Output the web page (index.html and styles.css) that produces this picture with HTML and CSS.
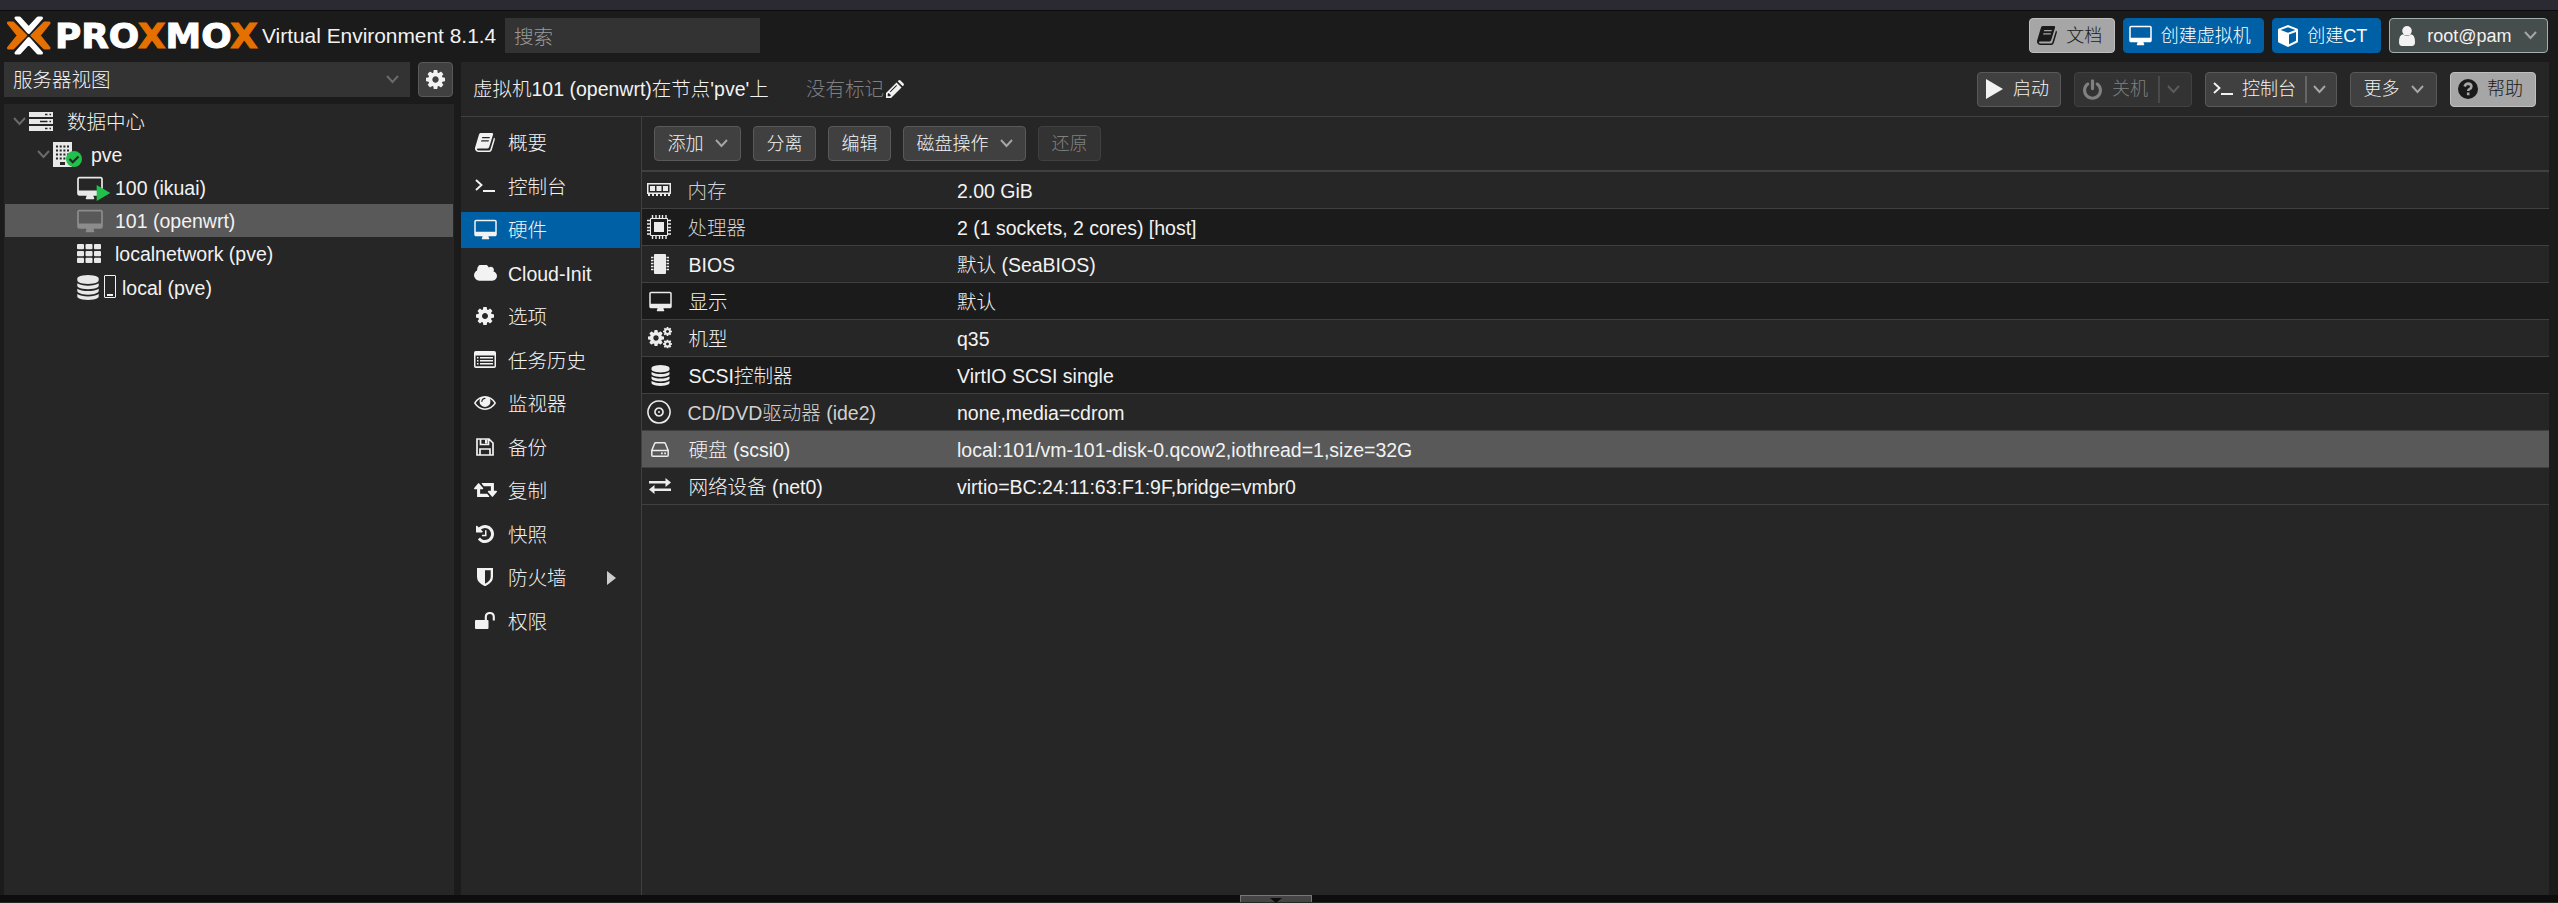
FILE: index.html
```
<!DOCTYPE html>
<html lang="zh-CN">
<head>
    <meta charset="UTF-8">
    <meta name="viewport" content="width=device-width, initial-scale=1.0">
    <title>pve - Proxmox Virtual Environment</title>
    <link rel="stylesheet" href="styles.css">
</head>
<body>

    <!-- Icon set -->
    <svg class="sprite" xmlns="http://www.w3.org/2000/svg">
        <symbol id="desktop" viewBox="0 0 1920 1792"><path d="M1792 1056v-832q0-13-9.500-22.500t-22.500-9.500h-1600q-13 0-22.500 9.500t-9.500 22.500v832q0 13 9.500 22.500t22.500 9.500h1600q13 0 22.500-9.500t9.500-22.500zm128-832v1088q0 66-47 113t-113 47h-544q0 37 16 77.500t32 71 16 43.500q0 26-19 45t-45 19h-512q-26 0-45-19t-19-45q0-14 16-44t32-70 16-78h-544q-66 0-113-47t-47-113v-1088q0-66 47-113t113-47h1600q66 0 113 47t47 113z"/></symbol>
        <symbol id="cog" viewBox="128 128 1536 1536"><path d="M1152 896q0-106-75-181t-181-75-181 75-75 181 75 181 181 75 181-75 75-181zm512-109v222q0 12-8 23t-20 13l-185 28q-19 54-39 91 35 50 107 138 10 12 10 25t-9 23q-27 37-99 108t-94 71q-12 0-26-9l-138-108q-44 23-91 38-16 136-29 186-7 28-36 28h-222q-14 0-24.500-8.500t-11.500-21.500l-28-184q-49-16-90-37l-141 107q-10 9-25 9-14 0-25-11-126-114-165-168-7-10-7-23 0-12 8-23 15-21 51-66.500t54-70.500q-27-50-41-99l-183-27q-13-2-21-12.500t-8-23.500v-222q0-12 8-23t19-13l186-28q14-46 39-92-40-57-107-138-10-12-10-24 0-10 9-23 26-36 98.500-107.500t94.500-71.500q13 0 26 10l138 107q44-23 91-38 16-136 29-186 7-28 36-28h222q14 0 24.500 8.500t11.500 21.500l28 184q49 16 90 37l142-107q9-9 24-9 13 0 25 10 129 119 165 170 7 8 7 22 0 12-8 23-15 21-51 66.500t-54 70.500q26 50 41 98l183 28q13 2 21 12.500t8 23.500z"/></symbol>
        <symbol id="cogs" viewBox="0 0 24 22">
            <use href="#cog" x="0" y="3" width="16" height="16"/>
            <use href="#cog" x="15" y="0" width="9" height="9"/>
            <use href="#cog" x="15" y="12.500" width="9" height="9"/>
        </symbol>
        <symbol id="cloud" viewBox="64 256 1920 1280"><path d="M1984 1152q0 159-112.500 271.500t-271.500 112.500h-1088q-185 0-316.500-131.500t-131.500-316.500q0-132 71-241.500t187-163.500q-2-28-2-43 0-212 150-362t362-150q158 0 286.500 88t187.500 230q70-62 166-62 106 0 181 75t75 181q0 75-41 138 129 30 213 134.500t84 239.500z"/></symbol>
        <symbol id="eye" viewBox="0 384 1792 1152"><path d="M1664 960q-152-236-381-353 61 104 61 225 0 185-131.500 316.500t-316.500 131.500-316.500-131.500-131.500-316.500q0-121 61-225-229 117-381 353 133 205 333.500 326.500t434.500 121.500 434.500-121.500 333.500-326.500zm-720-384q0-20-14-34t-34-14q-125 0-214.500 89.500t-89.500 214.500q0 20 14 34t34 14 34-14 14-34q0-86 61-147t147-61q20 0 34-14t14-34zm848 384q0 34-20 69-140 230-376.500 368.500t-499.500 138.500-499.500-139-376.500-368q-20-35-20-69t20-69q140-229 376.500-368t499.500-139 499.500 139 376.500 368q20 35 20 69z"/></symbol>
        <symbol id="database" viewBox="128 0 1536 1792"><path d="M896 768q237 0 443-43t325-127v170q0 69-103 128t-280 93.500-385 34.500-385-34.500-280-93.500-103-128v-170q119 84 325 127t443 43zm0 768q237 0 443-43t325-127v170q0 69-103 128t-280 93.500-385 34.500-385-34.500-280-93.500-103-128v-170q119 84 325 127t443 43zm0-384q237 0 443-43t325-127v170q0 69-103 128t-280 93.500-385 34.500-385-34.500-280-93.500-103-128v-170q119 84 325 127t443 43zm0-1152q208 0 385 34.500t280 93.500 103 128v128q0 69-103 128t-280 93.500-385 34.500-385-34.500-280-93.500-103-128v-128q0-69 103-128t280-93.500 385-34.500z"/></symbol>
        <symbol id="history" viewBox="128 128 1536 1536"><path d="M1664 896q0 156-61 298t-164 245-245 164-298 61q-172 0-327-72.500t-264-204.500q-7-10-6.500-22.500t8.500-20.500l137-138q10-9 25-9 16 2 23 12 73 95 179 147t225 52q104 0 198.500-40.500t163.500-109.500 109.500-163.500 40.500-198.500-40.500-198.500-109.500-163.500-163.500-109.500-198.500-40.500q-98 0-188 35.500t-160 101.500l137 138q31 30 14 69-17 40-59 40h-448q-26 0-45-19t-19-45v-448q0-42 40-59 39-17 69 14l130 129q107-101 244.500-156.500t284.500-55.500q156 0 298 61t245 164 164 245 61 298zm-640-288v448q0 14-9 23t-23 9h-320q-14 0-23-9t-9-23v-64q0-14 9-23t23-9h224v-352q0-14 9-23t23-9h64q14 0 23 9t9 23z"/></symbol>
        <symbol id="retweet" viewBox="0 384 1920 1152"><path d="M1280 1504q0 13-9.500 22.500t-22.500 9.500h-960q-8 0-13.500-2t-9-7-5.500-8-3-11.500-1-11.500v-600h-192q-26 0-45-19t-19-45q0-24 15-41l320-384q19-22 49-22t49 22l320 384q15 17 15 41 0 26-19 45t-45 19h-192v384h576q16 0 25 11l160 192q7 10 7 21zm640-416q0 24-15 41l-320 384q-20 23-49 23t-49-23l-320-384q-15-17-15-41 0-26 19-45t45-19h192v-384h-576q-16 0-25-12l-160-192q-7-9-7-20 0-13 9.500-22.500t22.500-9.500h960q8 0 13.500 2t9 7 5.500 8 3 11.500 1 11.500v600h192q26 0 45 19t19 45z"/></symbol>
        <symbol id="power" viewBox="128 0 1536 1664"><path d="M1664 896q0 156-61 298t-164 245-245 164-298 61-298-61-245-164-164-245-61-298q0-182 80.500-343t226.500-270q43-32 95.500-25t83.500 50q32 42 24.500 94.500t-49.500 84.500q-98 74-151.500 181t-53.500 228q0 104 40.500 198.500t109.500 163.500 163.500 109.500 198.500 40.500 198.500-40.500 163.500-109.500 109.500-163.500 40.500-198.500q0-121-53.500-228t-151.500-181q-42-32-49.500-84.500t24.500-94.500q31-43 84-50t95 25q146 109 226.500 270t80.500 343zm-640-768v640q0 52-38 90t-90 38-90-38-38-90v-640q0-52 38-90t90-38 90 38 38 90z"/></symbol>
        <symbol id="play" viewBox="0 0 17 20"><path d="M0 0l17 10L0 20z"/></symbol>
        <symbol id="book" viewBox="0 0 20 19">
            <path d="M5.500 0H17q1.500 0 1 1.700L14.200 14q-.5 1.500-2.200 1.500H3q-1.300 0-1 1.200.3.700 1.500.7h10.300q1.200 0 1.500-1L19 4.500q1.200.7.800 2.300L16.800 17q-.6 2-2.500 2H3Q.6 19 0 16.300q-.2-1 .2-2L4 1.600Q4.400 0 5.500 0zM7.300 4l-.4 1.300h7.600l.4-1.300zM6.400 7.200L6 8.500h7.600l.4-1.300z" fill-rule="evenodd"/>
        </symbol>
        <symbol id="terminal" viewBox="0 0 20 14">
            <path d="M1 1l5.500 5L1 11" fill="none" stroke="currentColor" stroke-width="1.900"/>
            <path d="M8 11h12v2H8z"/>
        </symbol>
        <symbol id="list" viewBox="0 0 22 17">
            <path d="M1.800 0h18.400Q22 0 22 1.800v13.400q0 1.800-1.800 1.800H1.800Q0 17 0 15.200V1.800Q0 0 1.800 0zM1.500 4.500v10.700h19V4.500z" fill-rule="evenodd"/>
            <path d="M3 6h1.500v1.500H3zM6 6h13v1.500H6zM3 9h1.500v1.500H3zM6 9h13v1.500H6zM3 12h1.500v1.500H3zM6 12h13v1.500H6z"/>
        </symbol>
        <symbol id="save" viewBox="0 0 18 18">
            <path d="M1 1h12l4 4v12H1zM4 17v-6h10v6M4.500 1v5.500h8V1" fill="none" stroke="currentColor" stroke-width="1.700"/>
            <path d="M9 1.500h2.300v4H9z"/>
        </symbol>
        <symbol id="shield" viewBox="0 0 16 18">
            <path d="M0 0h16v9q0 5.500-8 9.300Q0 14.500 0 9zM8 2.200v13.600q5.700-3 5.700-6.800V2.200z" fill-rule="evenodd"/>
        </symbol>
        <symbol id="unlock" viewBox="0 0 20 17">
            <path d="M1 8h11.500q1 0 1 1v7q0 1-1 1H1q-1 0-1-1V9q0-1 1-1z"/>
            <path d="M10.800 8.500V5q0-4 4-4t4 4v3.500" fill="none" stroke="currentColor" stroke-width="2.100"/>
        </symbol>
        <symbol id="pencil" viewBox="0 0 18 18">
            <path d="M0 18v-5L10.500 2.500l5 5L5 18zM1.700 14v2.300H4l1-1L2.700 13zM11.700 1.300L12.500.5q1-.9 2 0l3 3q.9 1 0 2l-.8.8zM10.300 5l-6.500 6.500.7.700L11 5.700z" fill-rule="evenodd"/>
        </symbol>
        <symbol id="cube" viewBox="0 0 20 22">
            <path d="M10 0l9.500 3.700q.5.300.5.900v11.800q0 .7-.6 1L10 22l-9.400-4.600q-.6-.3-.6-1V4.600Q0 4 .5 3.700zM10 2.200L2.600 5 10 7.800 17.400 5zM11 19.300l7-3.500V7l-7 2.600z" fill-rule="evenodd"/>
        </symbol>
        <symbol id="user" viewBox="0 0 16 20">
            <circle cx="8" cy="4.800" r="4.800"/>
            <path d="M4 8.300q1.700 1.600 4 1.600t4-1.600q4 .7 4 7.700 0 4-3 4H3q-3 0-3-4 0-7 4-7.700z"/>
        </symbol>
        <symbol id="help" viewBox="0 0 20 20">
            <circle cx="10" cy="10" r="10"/>
            <path class="help-mark" d="M6.600 7.500Q7.500 4.600 10.200 4.600q3.200.2 3.200 2.800 0 1.500-1.700 2.400-1.500.8-1.500 2.200M10.200 13.600v2.600"/>
        </symbol>
        <symbol id="chevron" viewBox="0 0 13 9"><path d="M1 1l5.500 6L12 1" fill="none" stroke="currentColor" stroke-width="1.900"/></symbol>
        <symbol id="server" viewBox="0 0 24 19">
            <path d="M0 0h24v5H0zM16 1.700v1.500h2.500V1.700zM20.500 1.700v1.500h1.500V1.700zM0 7h24v5H0zM11 8.700v1.500h7.500V8.700zM20.500 8.700v1.500h1.500V8.700zM0 14h24v5H0zM16 15.700v1.500h2.500v-1.500zM20.500 15.700v1.500h1.500v-1.500z" fill-rule="evenodd"/>
        </symbol>
        <symbol id="building" viewBox="0 0 19 25">
            <path d="M0 0h19v25H0zM3 3.500v2h2v-2zM6.700 3.500v2h2v-2zM10.400 3.500v2h2v-2zM14 3.500v2h2v-2zM3 7.500v2h2v-2zM6.700 7.500v2h2v-2zM10.400 7.500v2h2v-2zM14 7.500v2h2v-2zM3 11.500v2h2v-2zM6.700 11.500v2h2v-2zM10.400 11.500v2h2v-2zM14 11.500v2h2v-2zM3 15.500v2h2v-2zM6.700 15.500v2h2v-2zM10.400 15.500v2h2v-2zM7 20v3h5v-3z" fill-rule="evenodd"/>
        </symbol>
        <symbol id="check" viewBox="0 0 16 16">
            <circle cx="8" cy="8" r="8"/>
            <path d="M3.500 8l3.300 3.300L12.500 5.500" fill="none" stroke="#262626" stroke-width="2.200"/>
        </symbol>
        <symbol id="grid" viewBox="0 0 24 19">
            <rect width="7" height="5.300" rx="1"/><rect x="8.500" width="7" height="5.300" rx="1"/><rect x="17" width="7" height="5.300" rx="1"/>
            <rect y="6.900" width="7" height="5.300" rx="1"/><rect x="8.500" y="6.900" width="7" height="5.300" rx="1"/><rect x="17" y="6.900" width="7" height="5.300" rx="1"/>
            <rect y="13.700" width="7" height="5.300" rx="1"/><rect x="8.500" y="13.700" width="7" height="5.300" rx="1"/><rect x="17" y="13.700" width="7" height="5.300" rx="1"/>
        </symbol>
        <symbol id="memory" viewBox="0 0 24 14">
            <path d="M0 0h24v11h-1v2h-2v-2h-2v2h-2v-2h-2v2h-2v-2h-2v2H9v-2H7v2H5v-2H3v2H1v-2H0zM1.500 1.500v8h21v-8z" fill-rule="evenodd"/>
            <path d="M3 3h5v5H3zM9.500 3h5v5h-5zM16 3h5v5h-5z"/>
        </symbol>
        <symbol id="cpu" viewBox="0 0 24 24">
            <path d="M3.500 3.500h17v17h-17z" fill="none" stroke="currentColor" stroke-width="1"/>
            <path d="M7 7h10v10H7z"/>
            <path d="M5.500 0v3M9 0v3M12.500 0v3M15.500 0v3M19 0v3M5.500 21v3M9 21v3M12.500 21v3M15.500 21v3M19 21v3M0 5.500h3M0 9h3M0 12.500h3M0 15.500h3M0 19h3M21 5.500h3M21 9h3M21 12.500h3M21 15.500h3M21 19h3" stroke="currentColor" stroke-width="1.400"/>
        </symbol>
        <symbol id="chip" viewBox="0 0 18 20">
            <rect x="3" width="12" height="20" rx="1"/>
            <path d="M0 3.500h2.500M0 6.500h2.500M0 9.500h2.500M0 12.500h2.500M0 15.500h2.500M15.500 3.500H18M15.500 6.500H18M15.500 9.500H18M15.500 12.500H18M15.500 15.500H18" stroke="currentColor" stroke-width="1.400"/>
        </symbol>
        <symbol id="disc" viewBox="0 0 24 24">
            <path d="M12 1a11 11 0 1 0 .01 0zM12 8a4 4 0 1 0 .01 0z" fill="none" stroke="currentColor" stroke-width="1.600"/>
            <circle cx="12" cy="12" r="1"/>
        </symbol>
        <symbol id="hdd" viewBox="0 0 18 15">
            <path d="M.8 8.500v4.700q0 1 1 1h14.400q1 0 1-1V8.500zL3.500 1.700q.3-.9 1.300-.9h8.400q1 0 1.300.9l2.700 6.800" fill="none" stroke="currentColor" stroke-width="1.500"/>
            <path d="M10 10.400h1.800v1.800H10zM13.200 10.400H15v1.800h-1.800z"/>
        </symbol>
        <symbol id="exchange" viewBox="0 0 22 16">
            <path d="M0 3h16.500V0L22 4.500 16.500 9V5.500H0zM22 13H5.500v3L0 11.500 5.500 7v3.500H22z" />
        </symbol>
    </svg>

    <div class="browser-edge"></div>

    <!-- Top bar: logo, search and user menu -->
    <header class="topbar">
        <svg class="logo" viewBox="0 0 252 40">
            <path class="logo-light" d="M9 2H12.500L21.700 12 31 2H34.500L21.700 16.500zM9 37H12.500L21.700 27 31 37H34.500L21.700 22.500z"/>
            <path class="logo-orange" d="M1.500 7H6L18.500 19.500 6 32H1.500L11.500 19.500zM42 7H37.500L25 19.500 37.500 32H42L32 19.500z"/>
            <text class="logo-text" x="48" y="31.500" textLength="203" lengthAdjust="spacingAndGlyphs">PRO<tspan class="x">X</tspan>MO<tspan class="x">X</tspan></text>
        </svg>
        <div class="version">Virtual Environment 8.1.4</div>
        <div class="search">搜索</div>
        <div class="top-buttons">
            <button class="btn light"><svg width="20" height="19"><use href="#book"/></svg>文档</button>
            <button class="btn blue"><svg width="23" height="21"><use href="#desktop"/></svg>创建虚拟机</button>
            <button class="btn blue ct"><svg width="20" height="22"><use href="#cube"/></svg>创建CT</button>
            <button class="btn user"><svg width="16" height="20"><use href="#user"/></svg>root@pam<svg class="arrow" width="13" height="9"><use href="#chevron"/></svg></button>
        </div>
    </header>

    <div class="workspace">
        <!-- Resource tree -->
        <aside class="sidebar">
            <div class="view-select">
                <div class="combo">服务器视图<svg width="13" height="9"><use href="#chevron"/></svg></div>
                <button class="btn gear"><svg width="19" height="19"><use href="#cog"/></svg></button>
            </div>
            <ul class="tree">
                <li class="level-0"><svg class="expander" width="13" height="9"><use href="#chevron"/></svg><span class="node-icon"><svg width="24" height="19"><use href="#server"/></svg></span>数据中心</li>
                <li class="level-1"><svg class="expander" width="13" height="9"><use href="#chevron"/></svg><span class="node-icon"><svg width="19" height="25"><use href="#building"/></svg><svg class="badge ok" width="16" height="16"><use href="#check"/></svg></span>pve</li>
                <li class="level-2"><span class="node-icon"><svg width="26" height="24"><use href="#desktop"/></svg><svg class="badge running" width="15" height="16"><use href="#play"/></svg></span>100 (ikuai)</li>
                <li class="level-2 selected"><span class="node-icon stopped"><svg width="26" height="24"><use href="#desktop"/></svg></span>101 (openwrt)</li>
                <li class="level-2"><span class="node-icon"><svg width="24" height="19"><use href="#grid"/></svg></span>localnetwork (pve)</li>
                <li class="level-2 storage"><span class="node-icon"><svg width="22" height="25"><use href="#database"/></svg><i class="usage"></i></span>local (pve)</li>
            </ul>
        </aside>

        <!-- Selected virtual machine -->
        <main class="content">
            <div class="content-header">
                <span class="vm-title">虚拟机101 (openwrt)在节点'pve'上</span>
                <span class="tags">没有标记</span>
                <svg width="18" height="18"><use href="#pencil"/></svg>
                <div class="actions">
                    <button class="btn"><svg width="17" height="20"><use href="#play"/></svg>启动</button>
                    <button class="btn disabled"><svg width="19" height="21"><use href="#power"/></svg>关机<i class="split"></i><svg class="arrow" width="13" height="9"><use href="#chevron"/></svg></button>
                    <button class="btn console"><svg width="20" height="14"><use href="#terminal"/></svg>控制台<i class="split"></i><svg class="arrow" width="13" height="9"><use href="#chevron"/></svg></button>
                    <button class="btn plain">更多<svg class="arrow" width="13" height="9"><use href="#chevron"/></svg></button>
                    <button class="btn light"><svg width="20" height="20"><use href="#help"/></svg>帮助</button>
                </div>
            </div>

            <div class="content-body">
                <nav class="menu">
                    <a><span><svg width="20" height="19"><use href="#book"/></svg></span>概要</a>
                    <a><span><svg width="20" height="14"><use href="#terminal"/></svg></span>控制台</a>
                    <a class="active"><span><svg width="23" height="21"><use href="#desktop"/></svg></span>硬件</a>
                    <a><span><svg width="23" height="16"><use href="#cloud"/></svg></span>Cloud-Init</a>
                    <a><span><svg width="18" height="18"><use href="#cog"/></svg></span>选项</a>
                    <a><span><svg width="22" height="17"><use href="#list"/></svg></span>任务历史</a>
                    <a><span><svg width="22" height="14"><use href="#eye"/></svg></span>监视器</a>
                    <a><span><svg width="18" height="18"><use href="#save"/></svg></span>备份</a>
                    <a><span><svg width="23" height="14"><use href="#retweet"/></svg></span>复制</a>
                    <a><span><svg width="18" height="18"><use href="#history"/></svg></span>快照</a>
                    <a><span><svg width="16" height="18"><use href="#shield"/></svg></span>防火墙<i class="submenu"></i></a>
                    <a><span><svg width="20" height="17"><use href="#unlock"/></svg></span>权限</a>
                </nav>

                <section class="hardware">
                    <div class="toolbar">
                        <button class="btn plain">添加<svg class="arrow" width="13" height="9"><use href="#chevron"/></svg></button>
                        <button class="btn plain">分离</button>
                        <button class="btn plain">编辑</button>
                        <button class="btn plain">磁盘操作<svg class="arrow" width="13" height="9"><use href="#chevron"/></svg></button>
                        <button class="btn plain disabled">还原</button>
                    </div>
                    <div class="rows">
                        <div class="row custom"><span class="row-icon"><svg width="24" height="14"><use href="#memory"/></svg></span><span class="key">内存</span><span class="value">2.00 GiB</span></div>
                        <div class="row custom"><span class="row-icon"><svg width="24" height="24"><use href="#cpu"/></svg></span><span class="key">处理器</span><span class="value">2 (1 sockets, 2 cores) [host]</span></div>
                        <div class="row"><span class="row-icon"><svg width="18" height="20"><use href="#chip"/></svg></span><span class="key">BIOS</span><span class="value">默认 (SeaBIOS)</span></div>
                        <div class="row"><span class="row-icon"><svg width="23" height="21"><use href="#desktop"/></svg></span><span class="key">显示</span><span class="value">默认</span></div>
                        <div class="row"><span class="row-icon"><svg width="24" height="22"><use href="#cogs"/></svg></span><span class="key">机型</span><span class="value">q35</span></div>
                        <div class="row"><span class="row-icon"><svg width="19" height="21"><use href="#database"/></svg></span><span class="key">SCSI控制器</span><span class="value">VirtIO SCSI single</span></div>
                        <div class="row custom"><span class="row-icon"><svg width="24" height="24"><use href="#disc"/></svg></span><span class="key">CD/DVD驱动器 (ide2)</span><span class="value">none,media=cdrom</span></div>
                        <div class="row selected"><span class="row-icon"><svg width="18" height="15"><use href="#hdd"/></svg></span><span class="key">硬盘 (scsi0)</span><span class="value">local:101/vm-101-disk-0.qcow2,iothread=1,size=32G</span></div>
                        <div class="row"><span class="row-icon"><svg width="22" height="16"><use href="#exchange"/></svg></span><span class="key">网络设备 (net0)</span><span class="value">virtio=BC:24:11:63:F1:9F,bridge=vmbr0</span></div>
                    </div>
                </section>
            </div>
        </main>
    </div>

    <!-- Collapsed log panel handle -->
    <footer class="log-splitter"><div class="handle"></div></footer>

</body>
</html>
```

FILE: styles.css
```
* {
    box-sizing: border-box;
}
body {
    font-family: "Liberation Sans", "Noto Sans CJK SC", sans-serif;
    font-size: 19.5px;
    font-weight: 300;
    line-height: 24px;
    background-color: #1b1b1b;
    color: #f2f2f2;
    margin: 0;
    height: 903px;
    display: flex;
    flex-direction: column;
    overflow: hidden;
    white-space: nowrap;
}
svg {
    fill: currentColor;
    flex: none;
    display: block;
}
.sprite {
    width: 0;
    height: 0;
    position: absolute;
}
.browser-edge {
    height: 11px;
    flex: none;
    background-color: #2b2a33;
    border-bottom: 1px solid #0c0c0d;
}
/* Top bar */
.topbar {
    height: 51px;
    flex: none;
    display: flex;
    align-items: center;
    padding: 0 10px 2px 7px;
}
.logo {
    width: 252px;
    height: 40px;
}
.logo-light {
    fill: #fff;
    stroke: #fff;
    stroke-width: 3;
    stroke-linejoin: round;
}
.logo-orange {
    fill: #e57000;
    stroke: #e57000;
    stroke-width: 3;
    stroke-linejoin: round;
}
.logo-text {
    font-family: "DejaVu Sans", sans-serif;
    font-weight: bold;
    font-size: 33px;
    fill: #fff;
    stroke: #fff;
    stroke-width: 1;
}
.logo-text .x {
    fill: #e57000;
    stroke: #e57000;
}
.version {
    width: 243px;
    margin-left: 3px;
    font-size: 20.9px;
}
.search {
    width: 255px;
    height: 35px;
    padding: 7px 9px 5px;
    background-color: #333;
    color: #9a9a9a;
}
.top-buttons {
    margin-left: auto;
    display: flex;
    gap: 8px;
}
/* Buttons */
.btn {
    height: 35px;
    display: flex;
    align-items: center;
    gap: 10px;
    padding: 0 11px 0 8px;
    border: 1px solid #595959;
    border-radius: 4px;
    background-color: #404040;
    color: #f2f2f2;
    font-family: inherit;
    font-size: 18px;
    font-weight: 300;
    line-height: 22px;
}
.btn.plain {
    padding: 0 12.5px;
    gap: 11px;
}
.btn.console {
    padding: 0 10px 0 7px;
    gap: 9px;
}
.btn.light {
    background-color: #a6a6a6;
    border-color: #bfbfbf;
    color: #1a1a1a;
    padding: 0 12px 0 7px;
    gap: 9px;
}
.btn.blue {
    background-color: #0060a6;
    border-color: #0060a6;
    color: #fff;
    padding: 0 12px 0 5px;
    gap: 8.5px;
}
.btn.ct {
    padding-right: 13px;
    gap: 9.5px;
}
.btn.user {
    background-color: #464d4d;
    border-color: #a3b0b0;
    padding: 0 10.5px 0 9px;
    gap: 12px;
}
.btn.disabled {
    background-color: #333;
    border-color: #404040;
    color: #808080;
}
.btn .arrow {
    color: #a6a6a6;
}
.btn.disabled .arrow {
    color: #5c5c5c;
}
.btn .split {
    width: 2px;
    height: 27px;
    background-color: #666;
    margin-right: -3px;
}
.btn.disabled .split {
    background-color: #4a4a4a;
}
.help-mark {
    fill: none;
    stroke: #a6a6a6;
    stroke-width: 2.6;
}
/* Layout of tree and content */
.workspace {
    flex: 1;
    min-height: 0;
    display: flex;
    gap: 7px;
    padding: 0 9px 0 4px;
}
.sidebar {
    width: 450px;
    flex: none;
    display: flex;
    flex-direction: column;
    gap: 7px;
}
.view-select {
    display: flex;
    gap: 8px;
}
.combo {
    width: 406px;
    height: 35px;
    display: flex;
    align-items: center;
    justify-content: space-between;
    padding: 0 11px 0 9px;
    background-color: #333;
}
.combo svg,
.expander {
    color: #6b6b6b;
}
.btn.gear {
    width: 35px;
    padding: 0;
    justify-content: center;
}
/* Resource tree */
.tree {
    flex: 1;
    list-style: none;
    margin: 0;
    padding: 1px;
    background-color: #262626;
}
.tree li {
    height: 33px;
    display: flex;
    align-items: center;
}
.tree li.selected {
    background-color: #595959;
}
.tree li.storage {
    padding-top: 2px;
}
.level-0 {
    padding-left: 8px;
}
.level-1 {
    padding-left: 32px;
}
.level-2 {
    padding-left: 72px;
}
.expander {
    margin-right: 3px;
}
.node-icon {
    width: 38px;
    position: relative;
    color: #e8e8e8;
}
.node-icon.stopped {
    color: #8c8c8c;
}
.storage .node-icon {
    width: 45px;
    display: flex;
    gap: 5px;
}
.usage {
    width: 12px;
    height: 23px;
    border: 1px solid #f2f2f2;
    border-radius: 1px;
    background: linear-gradient(#f2f2f2, #f2f2f2) center 18px / 6px 2px no-repeat;
}
.badge {
    position: absolute;
    color: #21bf4b;
}
.badge.ok {
    left: 13px;
    top: 9px;
}
.badge.running {
    left: 19px;
    top: 9px;
}
/* Content panel */
.content {
    flex: 1;
    display: flex;
    flex-direction: column;
    background-color: #262626;
}
.content-header {
    height: 55px;
    flex: none;
    display: flex;
    align-items: center;
    padding: 0 13px 0 12px;
    border-bottom: 1px solid #404040;
}
.vm-title {
    width: 333px;
}
.tags {
    color: #808080;
    margin-right: 2px;
}
.actions {
    margin-left: auto;
    display: flex;
    gap: 13px;
}
.content-body {
    flex: 1;
    display: flex;
}
/* Side menu */
.menu {
    width: 181px;
    flex: none;
    padding: 8px 1px 0 0;
    border-right: 1px solid #404040;
    display: flex;
    flex-direction: column;
    gap: 7.5px;
}
.menu a {
    height: 36px;
    display: flex;
    align-items: center;
}
.menu a.active {
    background-color: #0060a6;
}
.menu a span {
    width: 24px;
    margin: 0 11px 2px 12px;
    display: flex;
    justify-content: center;
}
.submenu {
    margin: 0 24px 0 auto;
    border: 7px solid transparent;
    border-left: 9px solid #ccc;
    border-right: 0;
}
/* Hardware table */
.hardware {
    flex: 1;
}
.toolbar {
    height: 55px;
    display: flex;
    align-items: flex-start;
    gap: 12px;
    padding: 9px 12px;
    border-bottom: 2px solid #404040;
}
.row {
    height: 37px;
    display: flex;
    align-items: center;
    border-bottom: 1px solid #404040;
}
.row:nth-child(even) {
    background-color: #1b1b1b;
}
.row.selected {
    background-color: #595959;
}
.row-icon {
    width: 36px;
    display: flex;
    justify-content: center;
    color: #ececec;
}
.key {
    width: 268px;
    padding: 2px 0 0 10.5px;
    margin-right: 11px;
}
.value {
    padding-top: 2px;
}
.row.custom .row-icon {
    width: 34px;
}
.row.custom .key {
    width: 270px;
    padding-left: 11.5px;
    color: #d0d0d0;
}
/* Bottom splitter */
.log-splitter {
    height: 8px;
    flex: none;
    background-color: #0d0d0d;
    border-bottom: 1px solid #262626;
}
.handle {
    width: 72px;
    height: 7px;
    margin-left: 1240px;
    border: 1px solid #777;
    border-bottom: 0;
    background-color: #454545;
    display: flex;
    justify-content: center;
}
.handle::after {
    content: "";
    border: 6px solid transparent;
    border-top: 5px solid #0d0d0d;
    border-bottom: 0;
    margin-top: 2px;
}
```
